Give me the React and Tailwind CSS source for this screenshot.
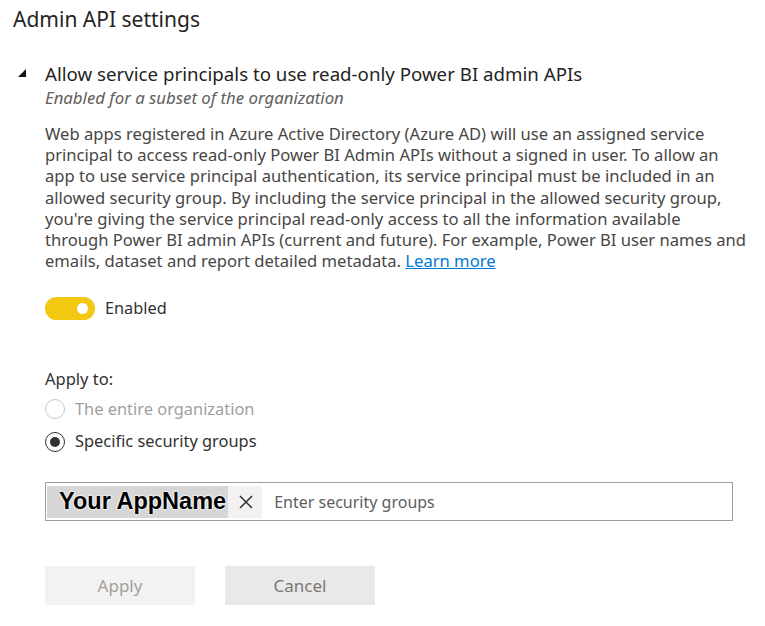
export default function App() {
  const font = { fontFamily: '"Segoe UI", "Noto Sans", "Open Sans", sans-serif' };
  const lines = [
    'Web apps registered in Azure Active Directory (Azure AD) will use an assigned service',
    'principal to access read-only Power BI Admin APIs without a signed in user. To allow an',
    'app to use service principal authentication, its service principal must be included in an',
    'allowed security group. By including the service principal in the allowed security group,',
    "you're giving the service principal read-only access to all the information available",
    'through Power BI admin APIs (current and future). For example, Power BI user names and',
  ];

  return (
    <div className="w-[765px] h-[626px] bg-white text-[#323130] overflow-hidden" style={font}>
      <h1 className="pl-[13px] pt-[5px] text-[21px] leading-[28px] text-[#252423]">Admin API settings</h1>

      <div className="mt-[28px] flex">
        <div className="w-[45px] shrink-0 pl-[18px] pt-[8px]">
          <svg className="w-[8px] h-[8px]" viewBox="0 0 8 8">
            <polygon points="8,0 8,8 0,8" fill="#111" />
          </svg>
        </div>

        <div>
          <div className="text-[18.7px] leading-[26px] text-[#252423]">
            Allow service principals to use read-only Power BI admin APIs
          </div>
          <div className="text-[16.8px] leading-[22px] italic text-[#605e5c]">
            Enabled for a subset of the organization
          </div>

          <div className="mt-[14px] text-[16.6px] leading-[21.2px] text-[#484644]">
            {lines.map((l) => (
              <div key={l} className="whitespace-nowrap">{l}</div>
            ))}
            <div className="whitespace-nowrap">
              emails, dataset and report detailed metadata.{' '}
              <a href="#" className="text-[#0078d4] underline">Learn more</a>
            </div>
          </div>

          <div className="mt-[25px] flex items-center gap-[10px]">
            <div className="w-[50px] h-[23px] rounded-full bg-[#f2c811] flex items-center justify-end pr-[7px]">
              <div className="w-[11px] h-[11px] rounded-full bg-white" />
            </div>
            <span className="text-[16.3px] text-[#323130]">Enabled</span>
          </div>

          <div className="mt-[47px] text-[16.5px] leading-[22px] text-[#323130]">Apply to:</div>

          <div className="mt-[7px] flex items-center gap-[10px] text-[16.4px] text-[#a19f9d]">
            <span className="w-[20px] h-[20px] rounded-full border border-[#c8c6c4]" />
            The entire organization
          </div>
          <div className="mt-[8px] flex items-center gap-[10px] text-[16.4px] text-[#323130]">
            <span className="w-[20px] h-[20px] rounded-full border border-[#323130] flex items-center justify-center">
              <span className="w-[10px] h-[10px] rounded-full bg-[#323130]" />
            </span>
            Specific security groups
          </div>

          <div className="mt-[28px] w-[688px] h-[39px] border border-[#a19f9d] flex items-center pl-[1px]">
            <div className="h-[32px] flex items-center bg-[#f3f2f1] pr-[9px]">
              <span
                className="h-[32px] flex items-center bg-[#d6d6d6] pl-[12px] pr-[2px] text-[23.5px] font-bold text-black"
                style={{ fontFamily: '"Liberation Sans", Arial, sans-serif', textShadow: '0 0 2px #fff, 0 0 2px #fff, 0 0 2px #fff' }}
              >
                Your AppName
              </span>
              <svg className="ml-[11px] w-[14px] h-[14px]" viewBox="0 0 14 14">
                <path d="M1 1 L13 13 M13 1 L1 13" stroke="#323130" strokeWidth="1.5" />
              </svg>
            </div>
            <span className="ml-[12px] text-[16px] text-[#605e5c]">Enter security groups</span>
          </div>

          <div className="mt-[45px] flex gap-[30px]">
            <button className="w-[150px] h-[39px] bg-[#f3f2f1] text-[#a19f9d] text-[17px]">Apply</button>
            <button className="w-[150px] h-[39px] bg-[#e9e9e9] text-[#797775] text-[17px]">Cancel</button>
          </div>
        </div>
      </div>
    </div>
  );
}
